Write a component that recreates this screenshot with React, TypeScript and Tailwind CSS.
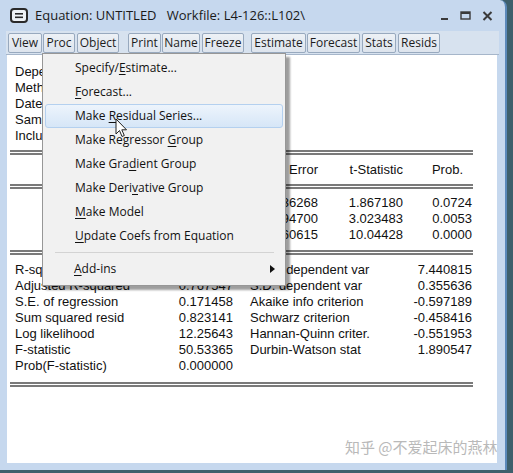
import React from "react";

const sans = { fontFamily: '"Liberation Sans", Arial, sans-serif' };
const ui = { fontFamily: '"Open Sans", "Noto Sans", sans-serif' };

const buttons = [
  { label: "View", w: "w-[34px]", gap: "ml-0" },
  { label: "Proc", w: "w-[32px]", gap: "ml-[1px]" },
  { label: "Object", w: "w-[42px]", gap: "ml-[2px]" },
  { label: "Print", w: "w-[33px]", gap: "ml-[9px]" },
  { label: "Name", w: "w-[38px]", gap: "ml-[1px]" },
  { label: "Freeze", w: "w-[42px]", gap: "ml-[2px]" },
  { label: "Estimate", w: "w-[55px]", gap: "ml-[7px]" },
  { label: "Forecast", w: "w-[53px]", gap: "ml-[1px]" },
  { label: "Stats", w: "w-[34px]", gap: "ml-[2px]" },
  { label: "Resids", w: "w-[42px]", gap: "ml-[2px]" },
];

const DoubleLine = ({ className }: { className: string }) => (
  <div className={`w-[463px] h-[5px] border-y-2 border-[#7a7a7a] ${className}`} />
);

const U = ({ children }: { children: React.ReactNode }) => (
  <span className="underline underline-offset-2">{children}</span>
);

const menuItems: React.ReactNode[] = [
  <>Specify/<U>E</U>stimate...</>,
  <><U>F</U>orecast...</>,
  <>Make <U>R</U>esidual Series...</>,
  <>Make Regressor <U>G</U>roup</>,
  <>Make Gra<U>d</U>ient Group</>,
  <>Make Deri<U>v</U>ative Group</>,
  <><U>M</U>ake Model</>,
  <><U>U</U>pdate Coefs from Equation</>,
];

const header = ["Dependent Variable: LNY", "Method: Least Squares", "Date: 04/12/20   Time: 10:32", "Sample: 1 31", "Included observations: 31"];

const coefs = [
  ["C", "0.814470", "0.436268", "1.867180", "0.0724"],
  ["LNX1", "0.286341", "0.094700", "3.023483", "0.0053"],
  ["LNX2", "0.608870", "0.060615", "10.04428", "0.0000"],
];

const stats = [
  ["R-squared", "0.783044", "Mean dependent var", "7.440815"],
  ["Adjusted R-squared", "0.767547", "S.D. dependent var", "0.355636"],
  ["S.E. of regression", "0.171458", "Akaike info criterion", "-0.597189"],
  ["Sum squared resid", "0.823141", "Schwarz criterion", "-0.458416"],
  ["Log likelihood", "12.25643", "Hannan-Quinn criter.", "-0.551953"],
  ["F-statistic", "50.53365", "Durbin-Watson stat", "1.890547"],
  ["Prob(F-statistic)", "0.000000", "", ""],
];

export default function App() {
  return (
    <div className="w-[513px] h-[473px] bg-[#3d5f6c] relative overflow-hidden">
      <div className="w-[507px] h-[470px] bg-[#c6d8ee] border-r-2 border-[#5b89ba] rounded-tr-[7px] flex flex-col">
        {/* title bar */}
        <div className="h-[31px] flex items-center pl-[10px] shrink-0" style={ui}>
          <svg width="18" height="15" viewBox="0 0 18 15">
            <rect x="1" y="1" width="16" height="13" rx="3" fill="#eef2f6" stroke="#2a2a2a" strokeWidth="2" />
            <rect x="5" y="5" width="8" height="1.6" fill="#2a2a2a" />
            <rect x="5" y="8.5" width="8" height="1.6" fill="#2a2a2a" />
          </svg>
          <span className="ml-[7px] text-[13px] text-[#1a1a1a] whitespace-pre">Equation: UNTITLED   Workfile: L4-126::L102\</span>
          <div className="ml-auto flex items-center gap-[11px] pr-[12px] text-[#333]">
            <svg width="9" height="10" viewBox="0 0 9 10"><rect x="1" y="7" width="7" height="2" fill="#3a3a3a" /></svg>
            <svg width="11" height="10" viewBox="0 0 11 10"><rect x="1" y="1" width="9" height="7" fill="none" stroke="#3a3a3a" strokeWidth="1.4" /><rect x="1" y="1" width="9" height="2" fill="#3a3a3a" /></svg>
            <svg width="11" height="10" viewBox="0 0 11 10"><path d="M1.5 1 L9.5 9 M9.5 1 L1.5 9" stroke="#3a3a3a" strokeWidth="2" /></svg>
          </div>
        </div>
        {/* toolbar */}
        <div className="h-[24px] shrink-0 ml-[6px] w-[493px] bg-[#d7e2ef] border-b border-[#a6b6ca] flex items-center pl-[2px]" style={ui}>
          {buttons.map((b) => (
            <div
              key={b.label}
              className={`${b.w} ${b.gap} h-[20px] flex items-center justify-center text-[12px] text-[#1c1c1c] bg-gradient-to-b from-[#edf1f6] to-[#dde4ed] border border-[#98a9be] rounded-[2px]`}
            >
              {b.label}
            </div>
          ))}
        </div>
        {/* content */}
        <div className="ml-[7px] w-[490px] flex-1 mb-[7px] bg-white relative" style={sans}>
          <div className="ml-[3px] pt-[9px] text-[13px] text-[#111] leading-[16px]">
            {header.map((h) => (
              <div key={h} className="h-[16px] pl-[5px] whitespace-pre">{h}</div>
            ))}
            <DoubleLine className="mt-[6px]" />
            <div className="mt-[7px] h-[16px] flex pl-[5px]">
              <div className="w-[140px] text-center">Variable</div>
              <div className="w-[78px] text-right">Coefficient</div>
              <div className="w-[85px] text-right">Std. Error</div>
              <div className="w-[85px] text-right">t-Statistic</div>
              <div className="w-[60px] text-right">Prob.</div>
            </div>
            <DoubleLine className="mt-[6px]" />
            <div className="mt-[6px]">
              {coefs.map((r) => (
                <div key={r[0]} className="h-[16px] flex pl-[5px]">
                  <div className="w-[140px] text-center">{r[0]}</div>
                  <div className="w-[78px] text-right">{r[1]}</div>
                  <div className="w-[85px] text-right">{r[2]}</div>
                  <div className="w-[85px] text-right">{r[3]}</div>
                  <div className="w-[69px] text-right">{r[4]}</div>
                </div>
              ))}
            </div>
            <DoubleLine className="mt-[7px]" />
            <div className="mt-[7px]">
              {stats.map((r) => (
                <div key={r[0]} className="h-[16px] flex pl-[5px]">
                  <div className="w-[140px]">{r[0]}</div>
                  <div className="w-[78px] text-right">{r[1]}</div>
                  <div className="ml-[17px] w-[140px]">{r[2]}</div>
                  <div className="w-[82px] text-right">{r[3]}</div>
                </div>
              ))}
            </div>
            <DoubleLine className="mt-[8px]" />
          </div>
          <div
            className="absolute left-[338px] top-[383px] text-[15px] leading-[18px] text-[#b9b9b9] whitespace-nowrap"
            style={{ fontFamily: '"Noto Sans CJK SC", sans-serif' }}
          >
            知乎 @不爱起床的燕林
          </div>
        </div>
      </div>

      {/* Proc dropdown menu */}
      <div
        className="absolute left-[42px] top-[53px] w-[244px] bg-[#f1f1f1] border border-[#979797] shadow-[4px_4px_2px_rgba(0,0,0,0.38)] pt-[2px] pb-[4px] text-[12px] text-[#111]"
        style={ui}
      >
        {menuItems.map((m, i) => (
          <div
            key={i}
            className={`h-[24px] mx-[2px] flex items-center pl-[29px] rounded-[3px] border ${
              i === 2 ? "bg-gradient-to-b from-[#edf4fc] to-[#d6e6f7] border-[#b4d0ef]" : "border-transparent"
            }`}
          >
            <span className="whitespace-pre">{m}</span>
          </div>
        ))}
        <div className="h-[9px] flex items-center ml-[12px] mr-[11px]">
          <div className="w-full h-[2px] border-t border-[#d3d3d3] border-b-white" />
        </div>
        <div className="h-[24px] mx-[2px] flex items-center pl-[29px] pr-[8px]">
          <span><U>A</U>dd-ins</span>
          <svg className="ml-auto" width="5" height="8" viewBox="0 0 5 8"><path d="M0 0 L5 4 L0 8 Z" fill="#111" /></svg>
        </div>
      </div>

      {/* mouse cursor */}
      <svg className="absolute left-[115px] top-[118px]" width="13" height="20" viewBox="0 0 13 20">
        <path d="M1 1 L1 16 L4.5 12.5 L7 18.5 L9.3 17.5 L6.8 11.8 L11.5 11.8 Z" fill="#fff" stroke="#222" strokeWidth="1" strokeLinejoin="round" />
      </svg>
    </div>
  );
}
